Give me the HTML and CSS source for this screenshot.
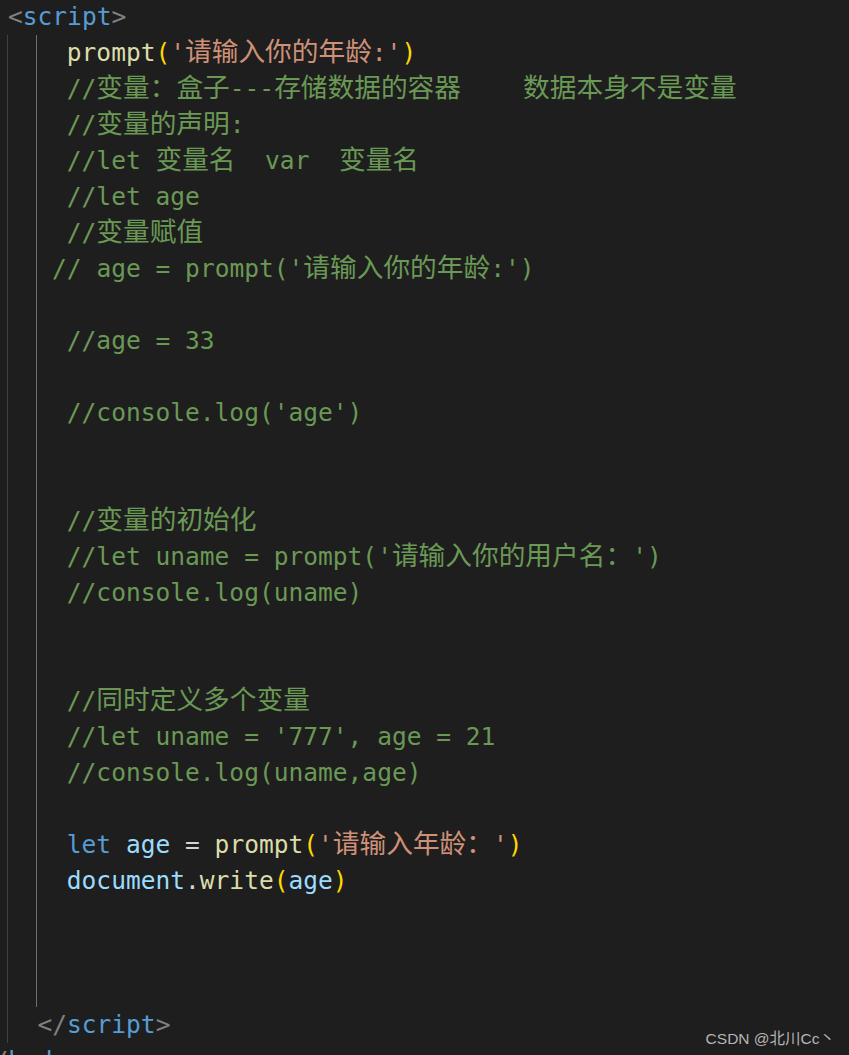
FILE: index.html
```html
<!DOCTYPE html>
<html lang="zh">
<head>
<meta charset="utf-8">
<title>script</title>
<link rel="stylesheet" href="styles.css">
</head>
<body>
<div class="editor">
  <div class="line l0"><span class="t">&lt;</span><span class="tn">script</span><span class="t">&gt;</span></div>
  <div class="block1">
    <div class="block2">
      <div class="line in"><span class="fn">prompt</span><span class="b">(</span><span class="s">'<span class="cjk">请输入你的年龄</span>:'</span><span class="b">)</span></div>
      <div class="line in c">//<span class="cjk">变量：盒子</span>---<span class="cjk">存储数据的容器</span>    <span class="cjk gap">数据本身不是变量</span></div>
      <div class="line in c">//<span class="cjk">变量的声明</span>:</div>
      <div class="line in c">//let <span class="cjk">变量名</span>  var  <span class="cjk">变量名</span></div>
      <div class="line in c">//let age</div>
      <div class="line in c">//<span class="cjk">变量赋值</span></div>
      <div class="line in1 c">// age = prompt('<span class="cjk">请输入你的年龄</span>:')</div>
      <div class="line"></div>
      <div class="line in c">//age = 33</div>
      <div class="line"></div>
      <div class="line in c">//console.log('age')</div>
      <div class="line"></div>
      <div class="line"></div>
      <div class="line in c">//<span class="cjk">变量的初始化</span></div>
      <div class="line in c">//let uname = prompt('<span class="cjk">请输入你的用户名：</span>')</div>
      <div class="line in c">//console.log(uname)</div>
      <div class="line"></div>
      <div class="line"></div>
      <div class="line in c cur">//<span class="cjk">同时定义多个变量</span></div>
      <div class="line in c">//let uname = '777', age = 21</div>
      <div class="line in c">//console.log(uname,age)</div>
      <div class="line"></div>
      <div class="line in"><span class="k">let</span> <span class="v">age</span> <span class="p">=</span> <span class="fn">prompt</span><span class="b">(</span><span class="s">'<span class="cjk">请输入年龄：</span>'</span><span class="b">)</span></div>
      <div class="line in"><span class="v">document</span><span class="p">.</span><span class="fn">write</span><span class="b">(</span><span class="v">age</span><span class="b">)</span></div>
      <div class="line"></div>
      <div class="line"></div>
      <div class="line"></div>
    </div>
    <div class="line in-close"><span class="t">&lt;/</span><span class="tn">script</span><span class="t">&gt;</span></div>
  </div>
  <div class="line l-body"><span class="t">&lt;/</span><span class="tn">body</span><span class="t">&gt;</span></div>
</div>
<div class="watermark">CSDN @北川Cc丶</div>
</body>
</html>
```

FILE: styles.css
```css
html, body {
  margin: 0;
  padding: 0;
  background: #1e1e1e;
  overflow: hidden;
}

body {
  width: 849px;
  height: 1055px;
  position: relative;
}

.editor {
  margin-top: -1px;
  font-family: "DejaVu Sans Mono", "Noto Sans CJK SC", monospace;
  font-size: 24.55px;
  color: #d4d4d4;
}

.line {
  height: 36px;
  line-height: 36px;
  white-space: pre;
}

.l0 {
  padding-left: 8px;
}

.block1 {
  margin-left: 7px;
  border-left: 1px solid #404040;
}

.block2 {
  margin-left: 28px;
  border-left: 1px solid #6e6e6e;
}

.in {
  padding-left: 29.8px;
}

.in1 {
  padding-left: 15.1px;
}

.in-close {
  padding-left: 29.4px;
}

.l-body {
  padding-left: 8px;
  text-indent: -29.4px;
}

.cur {
  position: relative;
}

.cur::before {
  content: "";
  position: absolute;
  top: 0;
  bottom: 1px;
  left: -37px;
  right: 0;
  border-top: 2px solid #282828;
  border-bottom: 2px solid #282828;
  z-index: -1;
}

.cjk {
  font-family: "Noto Sans CJK SC", sans-serif;
  font-size: 26.7px;
  line-height: 1;
}

.gap {
  margin-left: 3px;
}

.c { color: #6a9955; }
.fn { color: #dcdcaa; }
.s { color: #ce9178; }
.b { color: #ffd700; }
.t { color: #808080; }
.tn { color: #569cd6; }
.k { color: #569cd6; }
.v { color: #9cdcfe; }
.p { color: #d4d4d4; }

.watermark {
  position: absolute;
  right: 14px;
  top: 1026px;
  font-family: "Liberation Sans", "Noto Sans CJK SC", sans-serif;
  font-size: 15.5px;
  color: #b4b4b4;
}
```
